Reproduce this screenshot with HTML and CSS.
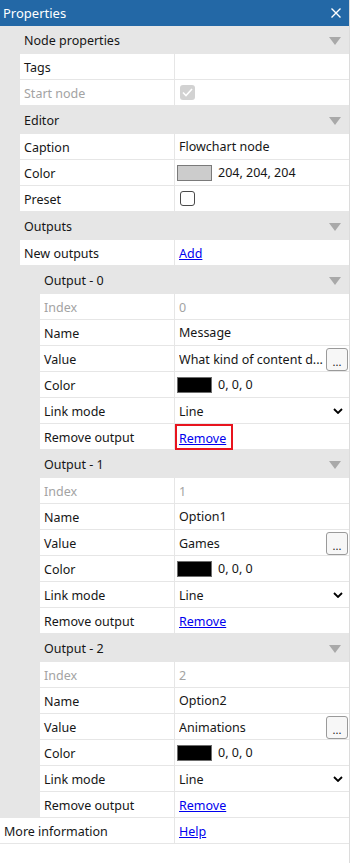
FILE: index.html
```html
<!DOCTYPE html>
<html>
<head>
<meta charset="utf-8">
<link rel="stylesheet" href="styles.css">
</head>
<body>
<div class="panel">
  <div class="titlebar">
    <span class="title">Properties</span>
    <svg class="close" width="10" height="10" viewBox="0 0 10 10"><path d="M0.5 0.5 L9.5 9.5 M9.5 0.5 L0.5 9.5" stroke="#fff" stroke-width="1.4" fill="none"/></svg>
  </div>

  <div class="group">
    <div class="ghead"><span>Node properties</span><svg class="tri" width="12" height="8" viewBox="0 0 12 8"><polygon points="0,0 12,0 6,8" fill="#a9a9a9"/></svg></div>
    <div class="row"><div class="k">Tags</div><div class="v"></div></div>
    <div class="row"><div class="k dis">Start node</div><div class="v"><span class="cb cb-dis"><svg width="11" height="9" viewBox="0 0 11 9"><path d="M1 4.5 L4 7.5 L10 1" stroke="#fff" stroke-width="1.6" fill="none"/></svg></span></div></div>
  </div>

  <div class="group">
    <div class="ghead"><span>Editor</span><svg class="tri" width="12" height="8" viewBox="0 0 12 8"><polygon points="0,0 12,0 6,8" fill="#a9a9a9"/></svg></div>
    <div class="row"><div class="k">Caption</div><div class="v">Flowchart node</div></div>
    <div class="row"><div class="k">Color</div><div class="v"><span class="sw sw-gray"></span>204, 204, 204</div></div>
    <div class="row"><div class="k">Preset</div><div class="v"><span class="cb"></span></div></div>
  </div>

  <div class="group">
    <div class="ghead"><span>Outputs</span><svg class="tri" width="12" height="8" viewBox="0 0 12 8"><polygon points="0,0 12,0 6,8" fill="#a9a9a9"/></svg></div>
    <div class="row"><div class="k">New outputs</div><div class="v"><a class="lnk">Add</a></div></div>

    <div class="group sub">
      <div class="ghead"><span>Output - 0</span><svg class="tri" width="12" height="8" viewBox="0 0 12 8"><polygon points="0,0 12,0 6,8" fill="#a9a9a9"/></svg></div>
      <div class="row"><div class="k dis">Index</div><div class="v dis">0</div></div>
      <div class="row"><div class="k">Name</div><div class="v">Message</div></div>
      <div class="row"><div class="k">Value</div><div class="v sp"><span class="txt">What kind of content d...</span><span class="btn">...</span></div></div>
      <div class="row"><div class="k">Color</div><div class="v"><span class="sw"></span>0, 0, 0</div></div>
      <div class="row"><div class="k">Link mode</div><div class="v sp"><span>Line</span><svg class="chev" width="10" height="6" viewBox="0 0 10 6"><path d="M1 1 L5 5 L9 1" stroke="#000" stroke-width="1.8" fill="none"/></svg></div></div>
      <div class="row"><div class="k">Remove output</div><div class="v hlcell"><span class="hl"><a class="lnk">Remove</a></span></div></div>
    </div>

    <div class="group sub">
      <div class="ghead"><span>Output - 1</span><svg class="tri" width="12" height="8" viewBox="0 0 12 8"><polygon points="0,0 12,0 6,8" fill="#a9a9a9"/></svg></div>
      <div class="row"><div class="k dis">Index</div><div class="v dis">1</div></div>
      <div class="row"><div class="k">Name</div><div class="v">Option1</div></div>
      <div class="row"><div class="k">Value</div><div class="v sp"><span class="txt">Games</span><span class="btn">...</span></div></div>
      <div class="row"><div class="k">Color</div><div class="v"><span class="sw"></span>0, 0, 0</div></div>
      <div class="row"><div class="k">Link mode</div><div class="v sp"><span>Line</span><svg class="chev" width="10" height="6" viewBox="0 0 10 6"><path d="M1 1 L5 5 L9 1" stroke="#000" stroke-width="1.8" fill="none"/></svg></div></div>
      <div class="row"><div class="k">Remove output</div><div class="v"><a class="lnk">Remove</a></div></div>
    </div>

    <div class="group sub">
      <div class="ghead"><span>Output - 2</span><svg class="tri" width="12" height="8" viewBox="0 0 12 8"><polygon points="0,0 12,0 6,8" fill="#a9a9a9"/></svg></div>
      <div class="row"><div class="k dis">Index</div><div class="v dis">2</div></div>
      <div class="row"><div class="k">Name</div><div class="v">Option2</div></div>
      <div class="row"><div class="k">Value</div><div class="v sp"><span class="txt">Animations</span><span class="btn">...</span></div></div>
      <div class="row"><div class="k">Color</div><div class="v"><span class="sw"></span>0, 0, 0</div></div>
      <div class="row"><div class="k">Link mode</div><div class="v sp"><span>Line</span><svg class="chev" width="10" height="6" viewBox="0 0 10 6"><path d="M1 1 L5 5 L9 1" stroke="#000" stroke-width="1.8" fill="none"/></svg></div></div>
      <div class="row"><div class="k">Remove output</div><div class="v"><a class="lnk">Remove</a></div></div>
    </div>
  </div>

  <div class="row rootrow"><div class="k">More information</div><div class="v"><a class="lnk">Help</a></div></div>
</div>
</body>
</html>
```

FILE: styles.css
```css
html, body {
  margin: 0;
  padding: 0;
  background: #fff;
}
body {
  font-family: "Noto Sans", "Open Sans", "DejaVu Sans", sans-serif;
  font-size: 12.5px;
  color: #161616;
}
.panel {
  width: 349px;
  height: 863px;
  border-right: 1px solid #dcdcdc;
  background: #fff;
  overflow: hidden;
}
.titlebar {
  height: 26px;
  background: #2368a6;
  color: #fff;
  display: flex;
  align-items: center;
  justify-content: space-between;
  padding: 0 8px 0 3px;
}
.title {
  font-size: 13px;
}
.close {
  display: block;
  margin-top: -1px;
}
.group {
  background: #e6e6e6;
  padding-left: 20px;
}
.ghead {
  height: 28px;
  display: flex;
  align-items: center;
  justify-content: space-between;
  padding: 0 8px 0 4px;
}
.ghead span {
  padding-top: 1px;
}
.tri {
  display: block;
  margin-top: 2px;
}
.row {
  display: flex;
  height: 25px;
  border-bottom: 1px solid #e6e6e6;
  background: #fff;
}
.k {
  width: 155px;
  flex: none;
  box-sizing: border-box;
  border-right: 1px solid #e6e6e6;
  padding: 2px 0 0 4px;
  display: flex;
  align-items: center;
  white-space: nowrap;
}
.sub .k {
  width: 135px;
}
.rootrow .k {
  width: 175px;
}
.v {
  flex: 1;
  min-width: 0;
  padding-left: 4px;
  display: flex;
  align-items: center;
  white-space: nowrap;
}
.v > span:first-child:not(.sw):not(.cb):not(.hl),
.v > a {
  padding-top: 2px;
}
.sp {
  justify-content: space-between;
}
.txt {
  overflow: hidden;
}
.dis {
  color: #a3a3a3;
}
.v.dis {
  padding-top: 2px;
}
.lnk {
  color: #0000ee;
  text-decoration: underline;
  cursor: pointer;
}
.sw {
  width: 33px;
  height: 14px;
  border: 1px solid #6d6d6d;
  background: #000;
  margin-left: -2px;
  margin-right: 6px;
  flex: none;
}
.sw-gray {
  background: #cccccc;
  border-color: #7a7a7a;
}
.cb {
  width: 13px;
  height: 13px;
  border: 1px solid #4a4a4a;
  border-radius: 3px;
  margin-left: 1px;
  background: #fff;
  display: flex;
  align-items: center;
  justify-content: center;
}
.cb-dis {
  width: 15px;
  height: 15px;
  border: none;
  background: #d2d2d2;
}
.btn {
  width: 22px;
  height: 23px;
  box-sizing: border-box;
  border: 1px solid #9a9a9a;
  border-radius: 3px;
  background: #f7f7f7;
  display: flex;
  align-items: flex-end;
  justify-content: center;
  font-size: 11px;
  line-height: 16px;
  margin-right: 1px;
  margin-top: 1px;
  flex: none;
}
.chev {
  display: block;
  margin-right: 6px;
  margin-top: 1px;
}
.hlcell {
  padding-left: 0;
  align-items: stretch;
}
.hl {
  display: flex;
  align-items: center;
  border: 2px solid #e8141e;
  padding: 2px 5px 0 2px;
  margin-bottom: -1px;
}
```
